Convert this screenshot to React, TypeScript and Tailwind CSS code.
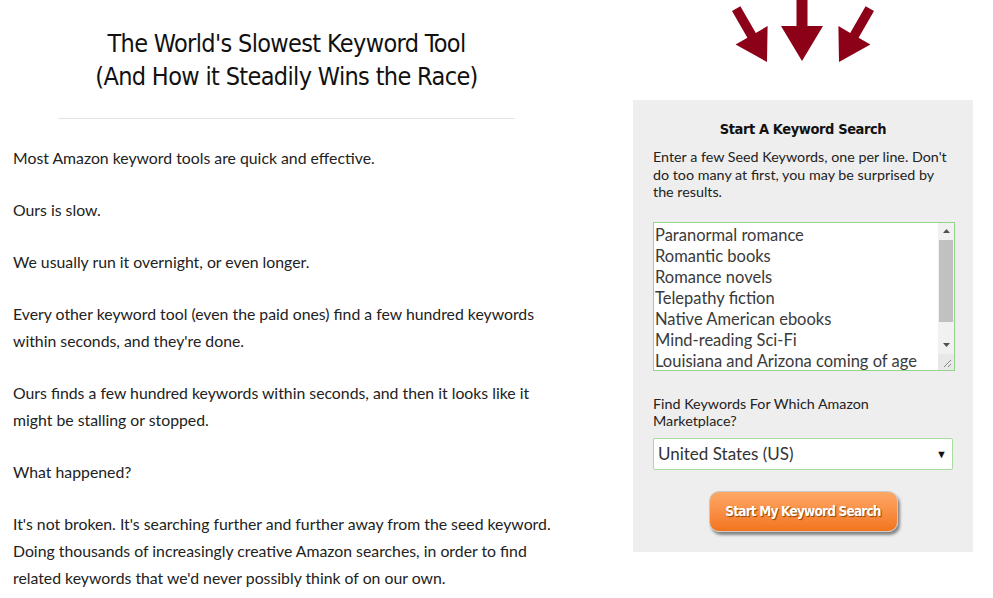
import React from 'react';

const paragraphs = [
  'Most Amazon keyword tools are quick and effective.',
  'Ours is slow.',
  'We usually run it overnight, or even longer.',
  "Every other keyword tool (even the paid ones) find a few hundred keywords within seconds, and they're done.",
  'Ours finds a few hundred keywords within seconds, and then it looks like it might be stalling or stopped.',
  'What happened?',
  "It's not broken. It's searching further and further away from the seed keyword. Doing thousands of increasingly creative Amazon searches, in order to find related keywords that we'd never possibly think of on our own.",
];

const seeds = [
  'Paranormal romance',
  'Romantic books',
  'Romance novels',
  'Telepathy fiction',
  'Native American ebooks',
  'Mind-reading Sci-Fi',
  'Louisiana and Arizona coming of age',
  '',
  '',
].join('\n');

const condensed = "font-['Ubuntu_Condensed','DejaVu_Sans_Condensed',sans-serif]";

// arrow pointing down, tip at 0,0
const Arrow = ({ x, y, angle, scale }: { x: number; y: number; angle: number; scale: number }) => (
  <path
    d="M0 0 L-21 -35 L-5.5 -35 L-5.5 -70 L5.5 -70 L5.5 -35 L21 -35 Z"
    transform={`translate(${x} ${y}) rotate(${angle}) scale(${scale})`}
    fill="#8c0018"
  />
);

const Arrows = () => (
  <svg width="170" height="70" viewBox="0 0 170 70" className="mx-auto block">
    <Arrow x={84} y={61} angle={0} scale={1} />
    <Arrow x={49} y={62} angle={-30} scale={0.88} />
    <Arrow x={121} y={62} angle={30} scale={0.88} />
  </svg>
);

// fake classic scrollbar drawn over the textarea
const Scrollbar = () => (
  <div className="pointer-events-none absolute top-px right-px bottom-px flex w-[16px] flex-col bg-[#f1f1f1]">
    <div className="flex h-[17px] items-center justify-center">
      <svg width="7" height="4" viewBox="0 0 7 4">
        <path d="M0 4 L3.5 0 L7 4 Z" fill="#505050" />
      </svg>
    </div>
    <div className="mx-[1px] h-[82px] bg-[#c1c1c1]" />
    <div className="flex-1" />
    <div className="flex h-[17px] items-center justify-center">
      <svg width="7" height="4" viewBox="0 0 7 4">
        <path d="M0 0 L3.5 4 L7 0 Z" fill="#505050" />
      </svg>
    </div>
    <div className="flex h-[16px] items-end justify-end bg-[#e8e8e8] p-[2px]">
      <svg width="9" height="9" viewBox="0 0 9 9">
        <path d="M8 1 L1 8 M8 5 L5 8" stroke="#8a8a8a" strokeWidth="1" />
      </svg>
    </div>
  </div>
);

const App = () => {
  return (
    <div className="flex bg-white pl-[13px] pr-[20px] font-['Lato',sans-serif] text-[#222]">
      {/* Left column */}
      <div className="w-[547px]">
        <h1 className={`mt-[27px] text-center ${condensed} text-[25px] leading-[33px] font-normal tracking-[-0.65px] text-[#111]`}>
          The World's Slowest Keyword Tool
          <br />
          (And How it Steadily Wins the Race)
        </h1>
        <hr className="mx-auto mt-[25px] w-[457px] border-t border-[#e3e3e3]" />
        <div className="mt-[25px]">
          {paragraphs.map((p, i) => (
            <p key={i} className="mb-[25px] text-[15.8px] leading-[27px]">
              {p}
            </p>
          ))}
        </div>
      </div>

      {/* Right column */}
      <div className="ml-[73px] w-[340px]">
        <div className="h-[100px]">
          <Arrows />
        </div>
        <div className="bg-[#eeeeee] px-[20px] pt-[19px] pb-[20px]">
          <h2 className={`text-center ${condensed} text-[14.5px] leading-[20px] font-bold tracking-[-0.4px] text-[#111]`}>
            Start A Keyword Search
          </h2>
          <p className="mt-[9px] text-[14.3px] leading-[17.5px] text-[#222]">
            Enter a few Seed Keywords, one per line. Don't do too many at first, you may be surprised by the
            results.
          </p>
          <div className="relative mt-[21px] w-[302px]">
            <textarea
              defaultValue={seeds}
              spellCheck={false}
              className="block h-[149px] w-full resize-none overflow-hidden border border-[#93d68a] bg-white pt-[2px] pr-[17px] pb-0 pl-px text-[16.5px] leading-[21px] font-normal text-[#3a3a3a] outline-none"
            />
            <Scrollbar />
          </div>
          <p className="mt-[24px] text-[14.3px] leading-[17.5px] text-[#222]">
            Find Keywords For Which Amazon Marketplace?
          </p>
          <div className="relative mt-[8px] w-[300px]">
            <select className="block h-[32px] w-full appearance-none rounded-[2px] border border-[#a6dc9d] bg-white pl-[4px] text-[17px] text-[#333] outline-none">
              <option>United States (US)</option>
              <option>United Kingdom (UK)</option>
              <option>Canada (CA)</option>
            </select>
            <span className="pointer-events-none absolute right-[6px] top-[8px] text-[11px] text-[#111]">▼</span>
          </div>
          <div className="mt-[21px] flex justify-center">
            <button className={`h-[41px] w-[189px] rounded-[10px] border border-[#c9c9c9] bg-gradient-to-b from-[#fda865] to-[#f37419] ${condensed} text-[13.5px] font-bold tracking-[-0.8px] text-white shadow-[2px_3px_3px_rgba(0,0,0,0.45)] [text-shadow:1px_1px_1px_#8a4200]`}>
              Start My Keyword Search
            </button>
          </div>
        </div>
      </div>
    </div>
  );
};

export default App;
